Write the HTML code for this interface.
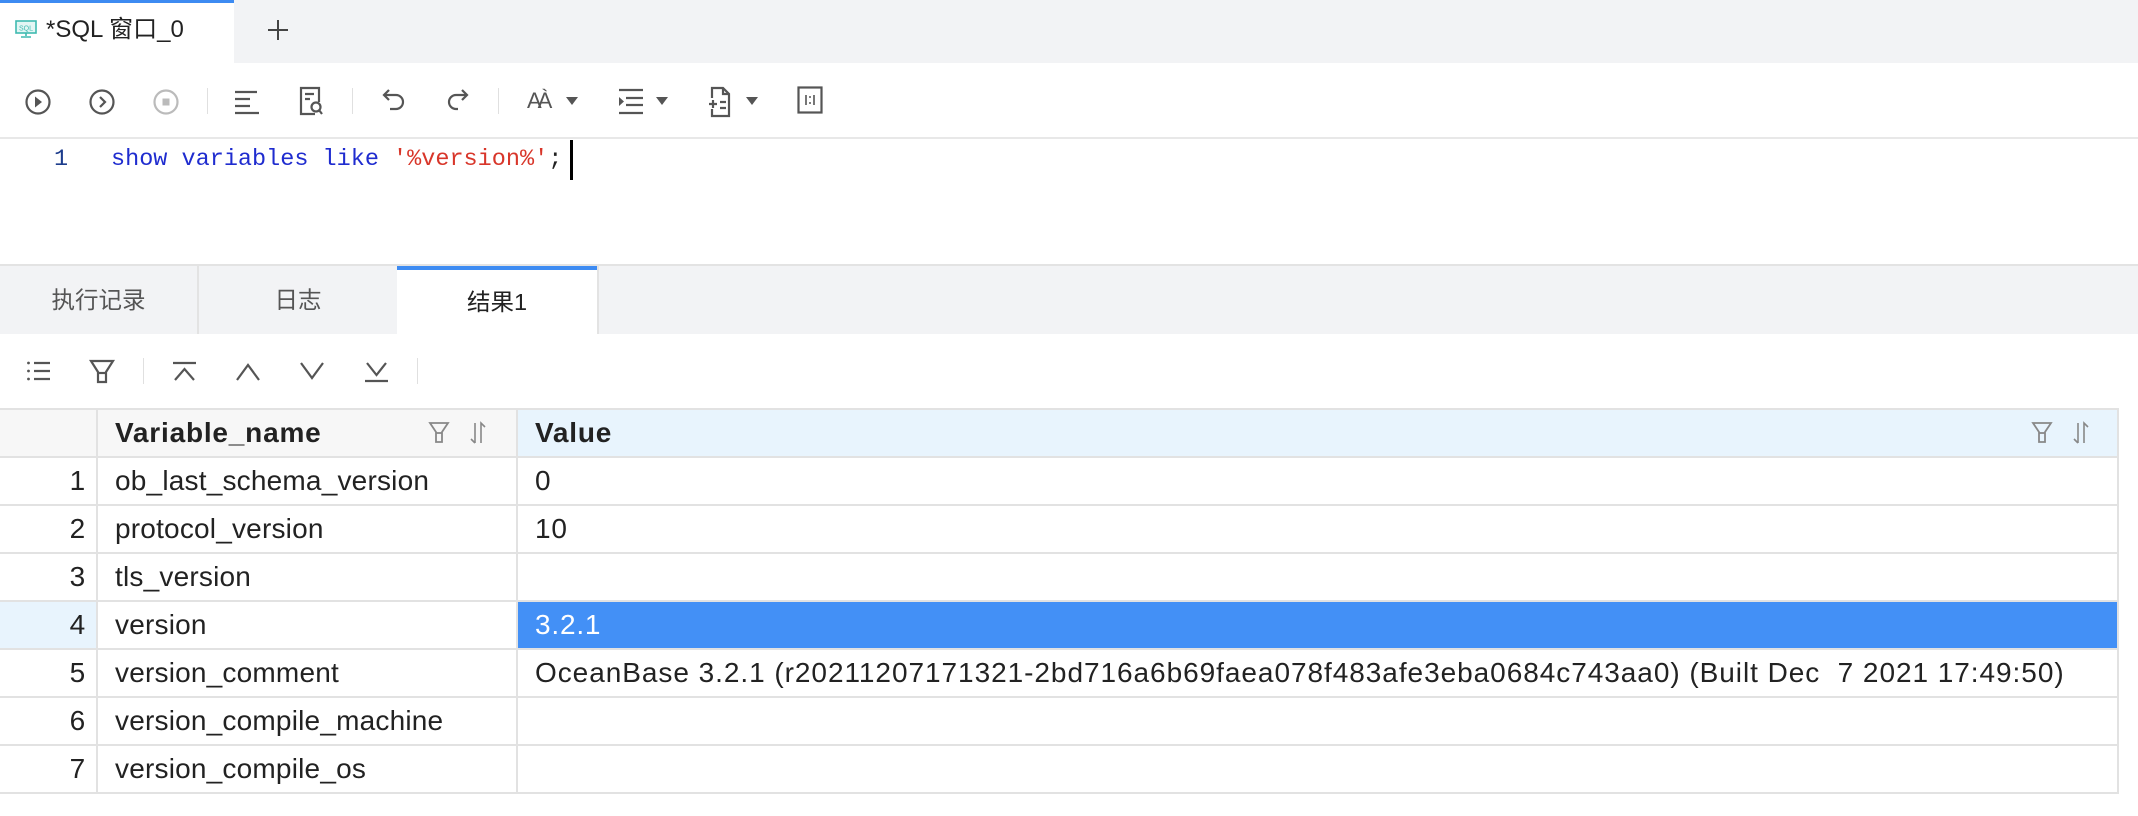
<!DOCTYPE html>
<html><head><meta charset="utf-8"><style>
*{margin:0;padding:0;box-sizing:border-box}
body{width:2138px;height:816px;background:#fff;position:relative;overflow:hidden;font-family:"Liberation Sans","Noto Sans CJK SC",sans-serif;color:#222}
.abs{position:absolute}
svg{position:absolute;overflow:visible}
.ic{stroke:#555;stroke-width:2.2;fill:none}
.cell{position:absolute;font-size:28px;letter-spacing:0.8px;line-height:48px;white-space:nowrap}
.vn{letter-spacing:0.2px}
.hl{position:absolute;left:0;width:2119px;height:2px;background:#e2e2e2}
.vl{position:absolute;width:2px;background:#e2e2e2}
</style></head><body>
<div class="abs" style="left:0;top:0;width:2138px;height:63px;background:#f2f3f5"></div>
<div class="abs" style="left:0;top:0;width:234px;height:63px;background:#fff;border-top:3px solid #3d8bf2"></div>
<svg style="left:15px;top:20px" width="22" height="18" viewBox="0 0 22 18"><rect x="1" y="1" width="20" height="12" fill="#e3f6f4" stroke="#3fbab0" stroke-width="1.6"/><text x="11" y="10.5" font-size="7" text-anchor="middle" fill="#3fbab0" font-family="Liberation Sans">SQL</text><path d="M11 13v3M6 17h10" stroke="#3fbab0" stroke-width="1.6"/></svg>
<div class="abs" style="left:46px;top:14px;font-size:24px;line-height:32px;color:#222">*SQL 窗口_0</div>
<svg style="left:266px;top:18px" width="24" height="24"><path d="M12 2v20M2 12h20" stroke="#444" stroke-width="2"/></svg>
<div class="abs" style="left:0;top:137px;width:2138px;height:2px;background:#e8e8e8"></div>
<svg style="left:25px;top:89px" width="26" height="26"><circle cx="13" cy="13" r="11.5" class="ic"/><path d="M10 7.5l7 5.5-7 5.5z" fill="#555"/></svg>
<svg style="left:89px;top:89px" width="26" height="26"><circle cx="13" cy="13" r="11.5" class="ic"/><path d="M11 8l5 5-5 5" class="ic"/></svg>
<svg style="left:153px;top:89px" width="26" height="26"><circle cx="13" cy="13" r="11.5" class="ic" style="stroke:#bbb"/><rect x="9.5" y="9.5" width="7" height="7" fill="#bbb"/></svg>
<div class="abs" style="left:207px;top:88px;width:1px;height:26px;background:#e0e0e0"></div>
<svg style="left:234px;top:90px" width="26" height="24"><path d="M1 2h22M1 9h15M1 16h15M1 23h24" class="ic"/></svg>
<svg style="left:299px;top:86px" width="26" height="30"><path d="M16 28H2V2h18v14" class="ic"/><path d="M6 8h9M6 13h5" class="ic"/><circle cx="17" cy="21" r="4.5" class="ic"/><path d="M20 24l3 4" class="ic"/></svg>
<div class="abs" style="left:352px;top:88px;width:1px;height:26px;background:#e0e0e0"></div>
<svg style="left:381px;top:88px" width="26" height="26"><path d="M4 7h11a7 7 0 0 1 0 14h-6" class="ic"/><path d="M8 2L3 7l5 5" class="ic"/></svg>
<svg style="left:444px;top:88px" width="26" height="26"><path d="M22 7H12a7 7 0 0 0 0 14h2" class="ic"/><path d="M18 2l5 5-5 5" class="ic"/></svg>
<div class="abs" style="left:498px;top:88px;width:1px;height:26px;background:#e0e0e0"></div>
<div class="abs" style="left:527px;top:86px;font-size:22px;line-height:30px;color:#555;letter-spacing:-4px">AÀ</div>
<svg style="left:566px;top:97px" width="12" height="9"><path d="M0 0h12L6 8z" fill="#555"/></svg>
<svg style="left:617px;top:89px" width="26" height="26"><path d="M2 1h24M9 9h17M9 16h17M2 24h24" class="ic"/><path d="M2 8l5 4.5-5 4.5z" fill="#555"/></svg>
<svg style="left:656px;top:97px" width="12" height="9"><path d="M0 0h12L6 8z" fill="#555"/></svg>
<svg style="left:708px;top:86px" width="26" height="32"><path d="M4 12V2h11l6 6v22H4v-7" class="ic"/><path d="M15 2v6h6" class="ic"/><path d="M1 18h8M5 14v8M12 16h6M12 22h6" class="ic"/></svg>
<svg style="left:746px;top:97px" width="12" height="9"><path d="M0 0h12L6 8z" fill="#555"/></svg>
<svg style="left:797px;top:86px" width="26" height="28"><rect x="1.5" y="1.5" width="23" height="25" class="ic"/><path d="M9 9v10M17 9v10" class="ic" style="stroke-width:1.6"/><circle cx="13" cy="11" r="1" fill="#555"/><circle cx="13" cy="17" r="1" fill="#555"/></svg>
<div class="abs" style="left:54px;top:145px;font-family:'Liberation Mono',monospace;font-size:23.5px;line-height:30px;color:#1d3d8c">1</div>
<div class="abs" style="left:111px;top:145px;font-family:'Liberation Mono',monospace;font-size:23.5px;line-height:30px;color:#1f2ccf;white-space:pre">show variables like <span style="color:#d8362a">'%version%'</span><span style="color:#222">;</span></div>
<div class="abs" style="left:570px;top:140px;width:3px;height:40px;background:#000"></div>
<div class="abs" style="left:0;top:264px;width:2138px;height:2px;background:#e3e3e3"></div>
<div class="abs" style="left:0;top:266px;width:2138px;height:68px;background:#f2f3f5"></div>
<div class="abs" style="left:197px;top:266px;width:2px;height:68px;background:#e3e3e3"></div>
<div class="abs" style="left:397px;top:266px;width:200px;height:68px;background:#fff;border-top:4px solid #3d8bf2"></div>
<div class="abs" style="left:597px;top:266px;width:2px;height:68px;background:#e3e3e3"></div>
<div class="abs" style="left:0;top:266px;width:197px;line-height:68px;text-align:center;font-size:23.5px;color:#555">执行记录</div>
<div class="abs" style="left:199px;top:266px;width:198px;line-height:68px;text-align:center;font-size:23.5px;color:#555">日志</div>
<div class="abs" style="left:397px;top:268px;width:200px;line-height:68px;text-align:center;font-size:23.5px;color:#222">结果1</div>
<svg style="left:27px;top:361px" width="24" height="20"><path d="M7 2h16M7 10h16M7 18h16" class="ic"/><circle cx="1.5" cy="2" r="1.4" fill="#555"/><circle cx="1.5" cy="10" r="1.4" fill="#555"/><circle cx="1.5" cy="18" r="1.4" fill="#555"/></svg>
<svg style="left:90px;top:360px" width="24" height="23"><path d="M1 1h22l-7 11v10H8V12z" class="ic"/><path d="M8 13h8" class="ic"/></svg>
<div class="abs" style="left:143px;top:358px;width:1px;height:26px;background:#e0e0e0"></div>
<svg style="left:173px;top:362px" width="23" height="20"><path d="M0 1h23M2 18l9.5-11 9.5 11" class="ic"/></svg>
<svg style="left:236px;top:363px" width="24" height="18"><path d="M1 17l11-15 11 15" class="ic"/></svg>
<svg style="left:300px;top:362px" width="24" height="18"><path d="M1 1l11 15 11-15" class="ic"/></svg>
<svg style="left:365px;top:362px" width="23" height="20"><path d="M0 19h23M2 1l9.5 12 9.5-12" class="ic"/></svg>
<div class="abs" style="left:417px;top:358px;width:1px;height:26px;background:#e0e0e0"></div>
<div class="abs" style="left:0;top:409px;width:517px;height:48px;background:#f7f7f7"></div>
<div class="abs" style="left:517px;top:409px;width:1602px;height:48px;background:#e8f4fd"></div>
<div class="abs" style="left:0;top:601px;width:97px;height:48px;background:#e8f4fd"></div>
<div class="abs" style="left:517px;top:601px;width:1602px;height:47px;background:#4390f6"></div>
<div class="hl" style="top:408px"></div>
<div class="hl" style="top:456px"></div>
<div class="hl" style="top:504px"></div>
<div class="hl" style="top:552px"></div>
<div class="hl" style="top:600px"></div>
<div class="hl" style="top:648px"></div>
<div class="hl" style="top:696px"></div>
<div class="hl" style="top:744px"></div>
<div class="hl" style="top:792px"></div>
<div class="vl" style="left:96px;top:408px;height:386px"></div>
<div class="vl" style="left:516px;top:408px;height:386px"></div>
<div class="vl" style="left:2117px;top:408px;height:386px"></div>
<div class="cell" style="left:115px;top:409px;font-weight:bold">Variable_name</div>
<div class="cell" style="left:535px;top:409px;font-weight:bold">Value</div>
<svg style="left:429px;top:422px" width="20" height="22"><path d="M1 1h18l-6 9v10H7V10z" stroke="#888" stroke-width="1.8" fill="none"/><path d="M7 11h6" stroke="#888" stroke-width="1.8"/></svg>
<svg style="left:470px;top:421px" width="16" height="24"><path d="M5 2v20M1 18l4 4M11 22V2l4 4" stroke="#888" stroke-width="1.6" fill="none"/></svg>
<svg style="left:2032px;top:422px" width="20" height="22"><path d="M1 1h18l-6 9v10H7V10z" stroke="#888" stroke-width="1.8" fill="none"/><path d="M7 11h6" stroke="#888" stroke-width="1.8"/></svg>
<svg style="left:2073px;top:421px" width="16" height="24"><path d="M5 2v20M1 18l4 4M11 22V2l4 4" stroke="#888" stroke-width="1.6" fill="none"/></svg>
<div class="cell" style="left:0;width:86px;text-align:right;top:457px">1</div>
<div class="cell" style="left:0;width:86px;text-align:right;top:505px">2</div>
<div class="cell" style="left:0;width:86px;text-align:right;top:553px">3</div>
<div class="cell" style="left:0;width:86px;text-align:right;top:601px">4</div>
<div class="cell" style="left:0;width:86px;text-align:right;top:649px">5</div>
<div class="cell" style="left:0;width:86px;text-align:right;top:697px">6</div>
<div class="cell" style="left:0;width:86px;text-align:right;top:745px">7</div>
<div class="cell vn" style="left:115px;top:457px">ob_last_schema_version</div>
<div class="cell vn" style="left:115px;top:505px">protocol_version</div>
<div class="cell vn" style="left:115px;top:553px">tls_version</div>
<div class="cell vn" style="left:115px;top:601px">version</div>
<div class="cell vn" style="left:115px;top:649px">version_comment</div>
<div class="cell vn" style="left:115px;top:697px">version_compile_machine</div>
<div class="cell vn" style="left:115px;top:745px">version_compile_os</div>
<div class="cell" style="left:535px;top:457px">0</div>
<div class="cell" style="left:535px;top:505px">10</div>
<div class="cell" style="left:535px;top:601px;color:#fff">3.2.1</div>
<div class="cell" style="left:535px;top:649px;white-space:pre;letter-spacing:0.95px">OceanBase 3.2.1 (r20211207171321-2bd716a6b69faea078f483afe3eba0684c743aa0) (Built Dec  7 2021 17:49:50)</div>
</body></html>
